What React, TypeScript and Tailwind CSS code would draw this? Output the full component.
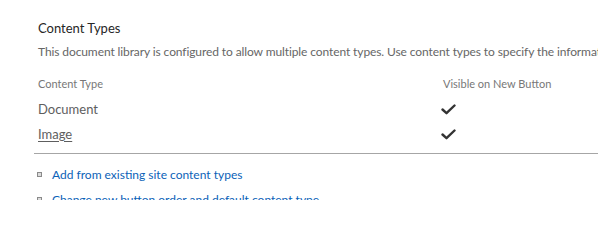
import React from "react";

const Check = () => (
  <svg width="15" height="11" viewBox="0 0 15 11" className="block">
    <path d="M1.5 5.5 L5.5 9.2 L13.5 1.5" fill="none" stroke="#333" strokeWidth="2.4" strokeLinecap="round" strokeLinejoin="round" />
  </svg>
);

const rows = [
  { name: "Document", link: false },
  { name: "Image", link: true },
];

const links = [
  "Add from existing site content types",
  "Change new button order and default content type",
];

export default function App() {
  return (
    <div className="w-[598px] h-[200px] overflow-hidden bg-white font-['Lato',sans-serif]">
      <div className="pt-[19px] pl-[38px] whitespace-nowrap">
        <div className="text-[13px] leading-[18px] text-[#262626]">Content Types</div>
        <div className="mt-[6px] text-[12px] leading-[18px] text-[#666] tracking-[-0.1px]">
          This document library is configured to allow multiple content types. Use content types to specify the information you want to display about an item, in addition to its policies, workflows, or other behavior.
        </div>
      </div>

      <div className="mt-[11px] ml-[34px] border-b border-[#a6a6a6]">
        <div className="flex h-[25px] items-center pl-[4px] text-[11px] text-[#777]">
          <div className="w-[405px]">Content Type</div>
          <div>Visible on New Button</div>
        </div>
        {rows.map((r) => (
          <div key={r.name} className="flex h-[25px] items-center pl-[4px] text-[13px] text-[#5e5e5e]">
            <div className="w-[403px]">
              <span className={r.link ? "underline underline-offset-2" : ""}>{r.name}</span>
            </div>
            <Check />
          </div>
        ))}
        <div className="h-[6px]" />
      </div>

      <ul className="mt-[8px] pl-[37px]">
        {links.map((l) => (
          <li key={l} className="flex h-[25px] items-center whitespace-nowrap">
            <span className="w-[5px] h-[5px] border border-[#8a8a8a] bg-[#dcdcdc] mr-[10px]" />
            <span className="text-[12px] text-[#0b62b8]">{l}</span>
          </li>
        ))}
      </ul>
    </div>
  );
}
